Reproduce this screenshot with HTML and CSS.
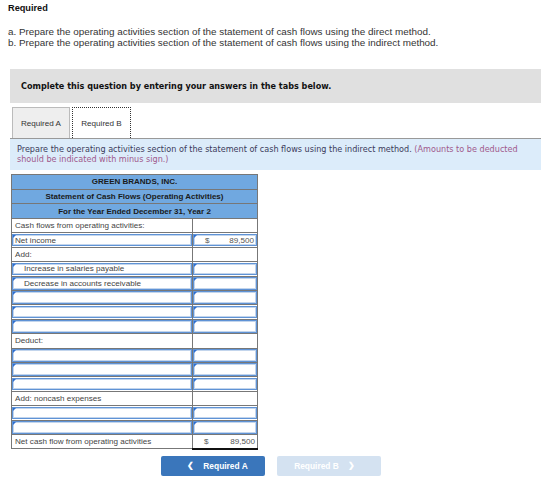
FILE: index.html
```html
<!DOCTYPE html>
<html>
<head>
<meta charset="utf-8">
<link rel="stylesheet" href="styles.css">
</head>
<body>
<div class="page">
  <div class="req-title">Required</div>
  <div class="req-list">
    <div>a. Prepare the operating activities section of the statement of cash flows using the direct method.</div>
    <div>b. Prepare the operating activities section of the statement of cash flows using the indirect method.</div>
  </div>
  <div class="complete-bar">Complete this question by entering your answers in the tabs below.</div>
  <div class="tabs">
    <div class="tab">Required A</div>
    <div class="tab active">Required B</div>
  </div>
  <div class="instr">Prepare the operating activities section of the statement of cash flows using the indirect method. <span class="note">(Amounts to be deducted should be indicated with minus sign.)</span></div>
  <table class="sheet">
    <colgroup><col class="c1"><col class="c2"></colgroup>
    <tr class="hd"><td colspan="2">GREEN BRANDS, INC.</td></tr>
    <tr class="hd"><td colspan="2">Statement of Cash Flows (Operating Activities)</td></tr>
    <tr class="hd"><td colspan="2">For the Year Ended December 31, Year 2</td></tr>
    <tr><td class="lbl">Cash flows from operating activities:</td><td></td></tr>
    <tr><td class="in"><div class="box">Net income</div></td><td class="in"><div class="box amt"><span>$</span><span>89,500</span></div></td></tr>
    <tr><td class="lbl">Add:</td><td></td></tr>
    <tr><td class="in"><div class="box ind">Increase in salaries payable</div></td><td class="in"><div class="box"></div></td></tr>
    <tr><td class="in"><div class="box ind">Decrease in accounts receivable</div></td><td class="in"><div class="box"></div></td></tr>
    <tr><td class="in"><div class="box"></div></td><td class="in"><div class="box"></div></td></tr>
    <tr><td class="in"><div class="box"></div></td><td class="in"><div class="box"></div></td></tr>
    <tr><td class="in"><div class="box"></div></td><td class="in"><div class="box"></div></td></tr>
    <tr><td class="lbl">Deduct:</td><td></td></tr>
    <tr><td class="in"><div class="box"></div></td><td class="in"><div class="box"></div></td></tr>
    <tr><td class="in"><div class="box"></div></td><td class="in"><div class="box"></div></td></tr>
    <tr><td class="in"><div class="box"></div></td><td class="in"><div class="box"></div></td></tr>
    <tr><td class="lbl">Add: noncash expenses</td><td></td></tr>
    <tr><td class="in"><div class="box"></div></td><td class="in"><div class="box"></div></td></tr>
    <tr><td class="in"><div class="box"></div></td><td class="in"><div class="box"></div></td></tr>
    <tr><td class="lbl">Net cash flow from operating activities</td><td class="total"><div class="amt"><span>$</span><span>89,500</span></div></td></tr>
  </table>
  <div class="nav">
    <div class="btn prev"><span class="chev">&#10094;</span>Required A</div>
    <div class="btn next">Required B<span class="chev">&#10095;</span></div>
  </div>
</div>
</body>
</html>
```
FILE: styles.css
```css
html, body { margin: 0; padding: 0; background: #fff; }
.page { padding: 3px 9px 0 10px; font-family: "Liberation Sans", Arial, sans-serif; color: #222; }
.req-title { font-size: 9.2px; font-weight: bold; line-height: 11px; margin-left: -2px; color: #111; }
.req-list { margin-top: 12px; margin-left: -2px; font-size: 9.9px; line-height: 11px; color: #333; }
.complete-bar { margin-top: 21px; height: 34px; background: #e0e0e0; display: flex; align-items: center; padding-left: 11px; font-family: "DejaVu Sans", Verdana, sans-serif; font-weight: bold; font-size: 8.1px; color: #111; }
.tabs { display: flex; gap: 2px; margin-top: 4px; padding-left: 2px; height: 31px; align-items: stretch; }
.tab { width: 56px; border: 1px solid #bbb; border-bottom: none; background: #eee; display: flex; align-items: center; justify-content: center; font-size: 8.1px; color: #333; }
.tab.active { background: #fff; border: 1px dotted #333; border-bottom: none; width: 57px; }
.instr { background: #dcecfa; border-top: 1px solid #999; height: 32px; box-sizing: border-box; padding: 5px 22px 0 7px; font-family: "DejaVu Sans", Verdana, sans-serif; font-size: 8.1px; line-height: 10px; color: #3b3b5a; }
.note { color: #a05a8c; }
.sheet { margin: 4px 0 0 1px; border-collapse: collapse; table-layout: fixed; width: 246px; font-size: 8.1px; color: #444; }
.c1 { width: 181px; }
.c2 { width: 65px; }
.sheet tr { height: 14.4px; }
.sheet td { border: 1px solid #777; padding: 0; white-space: nowrap; }
.sheet .hd { height: 14.7px; }
.hd td { background: #70a8e0; text-align: center; font-weight: bold; color: #1a1a1a; font-size: 8px; }
.lbl { padding-left: 3px !important; }
.box { height: 12.6px; box-sizing: border-box; border: 1px solid #5f93d6; box-shadow: inset 0 0 0 1px #c3d5ec; padding-left: 2px; display: flex; align-items: center; background: #fff; position: relative; }
.box::before { content: ""; position: absolute; left: 0; top: 0; border-style: solid; border-width: 3px 3px 0 0; border-color: #2f6fd0 transparent transparent transparent; }
.box.ind { padding-left: 11px; }
.amt { display: flex; justify-content: space-between; align-items: center; width: 100%; padding: 0 2px 0 11px; box-sizing: border-box; color: #555; }
.total { border-bottom: 2px solid #111 !important; border-left: 1px solid #111 !important; }
.nav { display: flex; gap: 12px; margin-top: 6px; padding-left: 151px; }
.btn { width: 104px; height: 20px; border-radius: 2px; display: flex; align-items: center; justify-content: center; color: #fff; font-weight: bold; font-size: 8.4px; }
.prev { background: #3a76bb; }
.next { background: #d4e2f1; }
.chev { font-size: 7.5px; margin: 0 9px; }
```
